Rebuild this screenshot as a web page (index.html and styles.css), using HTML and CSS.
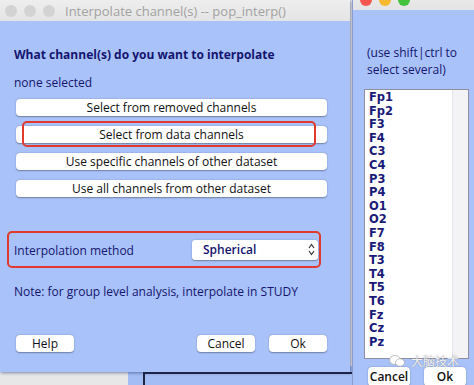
FILE: index.html
```html
<!DOCTYPE html>
<html lang="en">
  <head>
    <meta charset="UTF-8" />
    <title>Interpolate channel(s) -- pop_interp()</title>
    <link rel="stylesheet" href="styles.css">
  </head>
  <body>
    <div class="behind">
      <div class="behind-frame"></div>
    </div>

    <div class="window main-win">
      <div class="titlebar">
        <span class="dot"></span><span class="dot"></span><span class="dot"></span>
        <span class="title">Interpolate channel(s) -- pop_interp()</span>
      </div>
      <div class="panel">
        <p class="question">What channel(s) do you want to interpolate</p>
        <p class="status">none selected</p>
        <div class="btn-stack">
          <button class="wide">Select from removed channels</button>
          <button class="wide">Select from data channels</button>
          <button class="wide">Use specific channels of other dataset</button>
          <button class="wide">Use all channels from other dataset</button>
        </div>
        <div class="method-row">
          <span>Interpolation method</span>
          <div class="select">
            Spherical
            <svg class="arrows" width="7" height="13" viewBox="0 0 7 13">
              <path d="M1 5 L3.5 1.5 L6 5 M1 8 L3.5 11.5 L6 8" fill="none" stroke="#333" stroke-width="1.2" />
            </svg>
          </div>
        </div>
        <p class="note">Note: for group level analysis, interpolate in STUDY</p>
        <div class="actions">
          <button class="small">Help</button>
          <span class="spacer"></span>
          <button class="small">Cancel</button>
          <button class="small">Ok</button>
        </div>
      </div>
      <!-- red annotation marks -->
      <div class="mark mark-btn"></div>
      <div class="mark mark-method"></div>
    </div>

    <div class="window side-win">
      <div class="titlebar side-bar">
        <span class="dot red"></span><span class="dot yellow"></span><span class="dot green"></span>
      </div>
      <div class="side-panel">
        <p class="hint">(use shift|ctrl to<br>select several)</p>
        <div class="listbox">
          <ul id="chan-list"></ul>
          <div class="scroll-track"></div>
        </div>
        <div class="side-actions">
          <button class="tiny">Cancel</button>
          <button class="tiny">Ok</button>
        </div>
      </div>
      <div class="watermark">
        <svg class="wm-icon" width="16" height="12" viewBox="0 0 16 12">
          <ellipse cx="6" cy="5" rx="5.5" ry="4.5" fill="#fff" stroke="#999" stroke-width="0.6" />
          <ellipse cx="11" cy="7.5" rx="4.5" ry="3.8" fill="#fff" stroke="#999" stroke-width="0.6" />
        </svg>
        大脑技术
      </div>
    </div>

    <script>
      const chans = ["Fp1", "Fp2", "F3", "F4", "C3", "C4", "P3", "P4", "O1", "O2",
        "F7", "F8", "T3", "T4", "T5", "T6", "Fz", "Cz", "Pz"];
      document.getElementById("chan-list").innerHTML = chans
        .map((c) => `<li>${c}</li>`)
        .join("");
    </script>
  </body>
</html>
```

FILE: styles.css
```css
body {
  margin: 0;
  width: 474px;
  height: 385px;
  overflow: hidden;
  position: relative;
  background-color: #e7e7e7;
  font-family: "Open Sans", "DejaVu Sans", sans-serif;
  font-size: 12px;
  color: #14146e;
}
p {
  margin: 0;
}
button {
  font-family: inherit;
  font-size: 12px;
  color: #111;
  background: #fff;
  border: none;
  border-radius: 4px;
  box-shadow: 0 0.5px 1.5px rgba(0, 0, 0, 0.35);
  padding: 0;
  height: 17px;
  line-height: 17px;
}
.behind {
  position: absolute;
  left: 128px;
  top: 366px;
  width: 240px;
  height: 30px;
  background-color: #a4bdf4;
}
.behind-frame {
  margin: 6px 0 0 15px;
  height: 30px;
  border-left: 2px solid #1d2340;
  border-top: 2px solid #1d2340;
}
.window {
  position: absolute;
  background-color: #a9c2fa;
}
.main-win {
  left: 0;
  top: 0;
  width: 350px;
  height: 372px;
  box-shadow: 1px 1px 3px rgba(30, 40, 90, 0.5);
}
.titlebar {
  height: 21px;
  background: linear-gradient(#eeeeee, #e4e4e4);
  display: flex;
  align-items: center;
  padding-left: 5px;
  gap: 7px;
}
.dot {
  width: 12px;
  height: 12px;
  border-radius: 50%;
  background-color: #d3d3d3;
}
.title {
  margin-left: 3px;
  color: #a2a2a2;
  font-size: 13px;
}
.panel {
  padding: 26px 23px 0 14px;
  display: flex;
  flex-direction: column;
}
.question {
  font-weight: bold;
  line-height: 16px;
}
.status {
  margin-top: 12px;
  line-height: 16px;
}
.btn-stack {
  margin-top: 8px;
  margin-left: 2px;
  display: flex;
  flex-direction: column;
  gap: 10px;
}
.method-row {
  margin-top: 43px;
  display: flex;
  align-items: center;
  justify-content: space-between;
  height: 20px;
  padding-right: 9px;
}
.select {
  width: 126px;
  height: 20px;
  line-height: 20px;
  background: #fff;
  border-radius: 3px;
  box-shadow: 0 0.5px 1.5px rgba(0, 0, 0, 0.35);
  box-sizing: border-box;
  padding-left: 11px;
  font-weight: 600;
  position: relative;
}
.arrows {
  position: absolute;
  right: 3px;
  top: 3px;
}
.note {
  margin-top: 24px;
  line-height: 16px;
}
.actions {
  margin-top: 35px;
  margin-left: 2px;
  display: flex;
  gap: 14px;
}
.small {
  width: 58px;
}
.spacer {
  flex: 1;
}
.mark {
  position: absolute;
  border: 2.5px solid #e1392d;
  border-radius: 5px;
}
.mark-btn {
  left: 22px;
  top: 121px;
  width: 290px;
  height: 22px;
}
.mark-method {
  left: 7px;
  top: 231px;
  width: 310px;
  height: 33px;
}
.side-win {
  left: 352px;
  top: -10px;
  width: 124px;
  height: 400px;
  border-left: 1px solid #8d9ccc;
}
.side-bar {
  height: 20px;
  padding-left: 7px;
  gap: 7px;
}
.red {
  background-color: #f2564e;
}
.yellow {
  background-color: #f6b931;
}
.green {
  background-color: #45c23e;
}
.side-panel {
  padding: 34px 0 0 11px;
}
.hint {
  line-height: 17px;
  padding-left: 3px;
}
.listbox {
  margin-top: 11px;
  width: 105px;
  height: 270px;
  box-sizing: border-box;
  background: #fff;
  border: 1px solid #8e8e9e;
  display: flex;
}
.listbox ul {
  list-style: none;
  margin: 0;
  padding: 1px 0 0 4px;
  flex: 1;
  font-family: "DejaVu Sans", sans-serif;
  font-size: 11.5px;
  line-height: 13.6px;
  font-weight: bold;
  color: #1a1a78;
}
.scroll-track {
  width: 15px;
  background: #f3f3f6;
  border-left: 1px solid #e4e4ee;
}
.side-actions {
  margin-top: 8px;
  display: flex;
  gap: 14px;
  padding-left: 4px;
}
.tiny {
  width: 42px;
  height: 19px;
  line-height: 19px;
  font-weight: 600;
}
.watermark {
  position: absolute;
  left: 36px;
  top: 365px;
  font-family: "Noto Sans CJK SC", sans-serif;
  font-size: 12px;
  line-height: 12px;
  color: rgba(255, 255, 255, 0.92);
  text-shadow: 0 0 1px #777;
  display: flex;
  align-items: center;
  gap: 6px;
}
```
